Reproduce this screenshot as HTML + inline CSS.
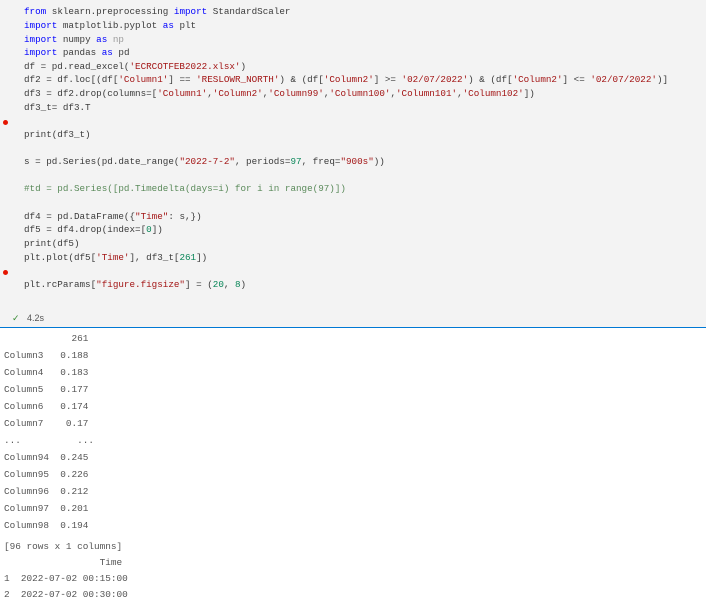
<!DOCTYPE html>
<html><head><style>
body{margin:0;width:706px;height:601px;overflow:hidden;background:#fff;font-family:"Liberation Mono",monospace;}
#code{position:absolute;left:0;top:0;width:706px;height:327px;background:#f3f3f3;}
.l{position:absolute;left:24px;font-size:9.25px;white-space:pre;color:#3b3b3b;line-height:12px;}
.k{color:#0000ff}.s{color:#a31515}.n{color:#098658}.g{color:#9a9a9a}
.dot{position:absolute;left:3px;width:5px;height:5px;border-radius:50%;background:#e51400;}
#blue{position:absolute;left:0;top:327px;width:706px;height:1px;background:#0078d4;}
.o{position:absolute;left:4px;font-size:9.4px;white-space:pre;color:#555;line-height:12px;}
</style></head><body>
<div id="code">
<div class="l" style="top:6px"><span class="k">from</span> sklearn.preprocessing <span class="k">import</span> StandardScaler</div>
<div class="l" style="top:20px"><span class="k">import</span> matplotlib.pyplot <span class="k">as</span> plt</div>
<div class="l" style="top:34px"><span class="k">import</span> numpy <span class="k">as</span> <span class="g">np</span></div>
<div class="l" style="top:47px"><span class="k">import</span> pandas <span class="k">as</span> pd</div>
<div class="l" style="top:61px">df = pd.read_excel(<span class="s">'ECRCOTFEB2022.xlsx'</span>)</div>
<div class="l" style="top:74px">df2 = df.loc[(df[<span class="s">'Column1'</span>] == <span class="s">'RESLOWR_NORTH'</span>) &amp; (df[<span class="s">'Column2'</span>] &gt;= <span class="s">'02/07/2022'</span>) &amp; (df[<span class="s">'Column2'</span>] &lt;= <span class="s">'02/07/2022'</span>)]</div>
<div class="l" style="top:88px">df3 = df2.drop(columns=[<span class="s">'Column1'</span>,<span class="s">'Column2'</span>,<span class="s">'Column99'</span>,<span class="s">'Column100'</span>,<span class="s">'Column101'</span>,<span class="s">'Column102'</span>])</div>
<div class="l" style="top:102px">df3_t= df3.T</div>
<div class="dot" style="top:120px"></div>
<div class="l" style="top:129px">print(df3_t)</div>
<div class="l" style="top:156px">s = pd.Series(pd.date_range(<span class="s">"2022-7-2"</span>, periods=<span class="n">97</span>, freq=<span class="s">"900s"</span>))</div>
<div class="l" style="top:183px"><span style="color:#5a8a5a">#td = pd.Series([pd.Timedelta(days=i) for i in range(97)])</span></div>
<div class="l" style="top:211px">df4 = pd.DataFrame({<span class="s">"Time"</span>: s,})</div>
<div class="l" style="top:224px">df5 = df4.drop(index=[<span class="n">0</span>])</div>
<div class="l" style="top:238px">print(df5)</div>
<div class="l" style="top:252px">plt.plot(df5[<span class="s">'Time'</span>], df3_t[<span class="n">261</span>])</div>
<div class="dot" style="top:270px"></div>
<div class="l" style="top:279px">plt.rcParams[<span class="s">"figure.figsize"</span>] = (<span class="n">20</span>, <span class="n">8</span>)</div>
<div style="position:absolute;left:12px;top:313px;font-family:'Liberation Sans',sans-serif;font-size:9px;color:#555"><span style="color:#388a34">✓</span>&nbsp;&nbsp;&nbsp;4.2s</div>
</div>
<div id="blue"></div>
<div class="o" style="top:333px">            261</div>
<div class="o" style="top:350px">Column3   0.188</div>
<div class="o" style="top:367px">Column4   0.183</div>
<div class="o" style="top:384px">Column5   0.177</div>
<div class="o" style="top:401px">Column6   0.174</div>
<div class="o" style="top:418px">Column7    0.17</div>
<div class="o" style="top:435px">...          ...</div>
<div class="o" style="top:452px">Column94  0.245</div>
<div class="o" style="top:469px">Column95  0.226</div>
<div class="o" style="top:486px">Column96  0.212</div>
<div class="o" style="top:503px">Column97  0.201</div>
<div class="o" style="top:520px">Column98  0.194</div>
<div class="o" style="top:541px">[96 rows x 1 columns]</div>
<div class="o" style="top:557px">                 Time</div>
<div class="o" style="top:573px">1  2022-07-02 00:15:00</div>
<div class="o" style="top:589px">2  2022-07-02 00:30:00</div>
</body></html>
